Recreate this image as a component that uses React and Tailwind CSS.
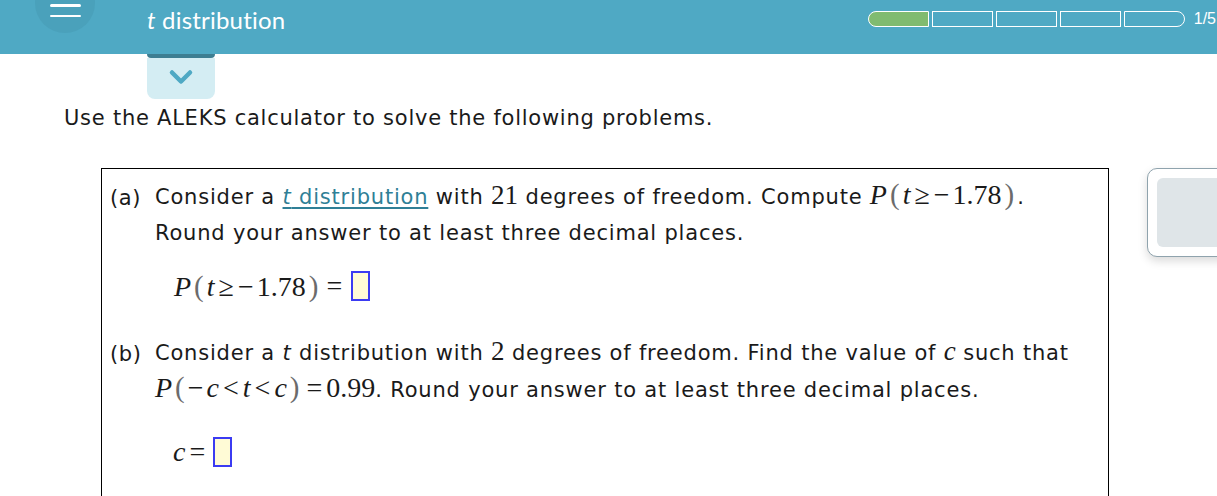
import { ChevronDown } from 'lucide-react'

const serif = "font-['Liberation_Serif','Times_New_Roman',serif] tracking-normal leading-none"
const mathSize = 'text-[28px]'

function AnswerBox() {
  return <span className="inline-block w-[19px] h-[30px] border-2 border-[#3b3bf2] bg-[#fffbd6] align-middle" />
}

function Paren({ children }) {
  return <span className="text-[#6b6b6b] text-[29px] inline-block scale-y-105 mx-[3px] leading-none">{children}</span>
}

function Op({ children }) {
  return <span className="mx-[4px]">{children}</span>
}

function ProbA() {
  return (
    <span className={`${serif} ${mathSize}`}>
      <i>P</i>
      <Paren>(</Paren>
      <i>t</i>
      <Op>≥</Op>
      <span className="mr-[3px]">−</span>1.78
      <Paren>)</Paren>
    </span>
  )
}

function ProgressBar() {
  const segments = [true, false, false, false, false]
  return (
    <div className="flex items-center gap-[3px]">
      {segments.map((done, i) => (
        <div
          key={i}
          className={`h-[16px] w-[61px] border-[1.5px] border-white ${
            i === 0 ? 'rounded-l-full' : ''
          } ${i === segments.length - 1 ? 'rounded-r-full' : ''} ${done ? 'bg-[#80bb70]' : ''}`}
        />
      ))}
    </div>
  )
}

export default function App() {
  return (
    <div className="relative w-[1217px] h-[496px] overflow-hidden bg-white font-['DejaVu_Sans',Verdana,sans-serif] text-[#1a1a1a]">
      {/* Header */}
      <div className="relative h-[54px] bg-[#4fa9c4] flex items-center">
        <div className="absolute left-[35px] top-[-27px] w-[60px] h-[60px] rounded-full bg-[#4aa1bb] flex flex-col items-center justify-end pb-[16px] gap-[8px]">
          <span className="block w-[31px] h-[2.5px] rounded bg-white" />
          <span className="block w-[31px] h-[2.5px] rounded bg-white" />
        </div>
        <div className="ml-[147px] text-white text-[24px] tracking-[0.2px] font-['Lato','Open_Sans',sans-serif] mt-[-15px]">
          <span className="italic">t</span> distribution
        </div>
        <div className="ml-auto flex items-center gap-[9px] mt-[-17px] mr-[1px]">
          <ProgressBar />
          <span className="text-white text-[16px] font-['Liberation_Sans',Arial,sans-serif]">1/5</span>
        </div>
      </div>

      {/* Collapse tab */}
      <div className="ml-[147px] w-[68px]">
        <div className="h-[4px] bg-[#3d7e92] rounded-b-sm" />
        <div className="h-[41px] bg-[#d4edf3] rounded-b-[8px] flex items-center justify-center">
          <ChevronDown size={36} strokeWidth={3} className="text-[#4fa9c4] -mt-[4px]" />
        </div>
      </div>

      <p className="ml-[64px] mt-[5px] text-[21px] leading-[28px] tracking-[0.75px]">
        Use the ALEKS calculator to solve the following problems.
      </p>

      <div className="flex items-start mt-[36px]">
        {/* Question box */}
        <div className="shrink-0 ml-[101px] w-[1008px] h-[340px] border border-black pt-[14px] text-[21px] tracking-[0.8px]">
          <div className="flex">
            <span className="w-[53px] pl-[8px] shrink-0 tracking-[0.6px]">(a)</span>
            <div className="leading-[36px] -mt-[4px]">
              <div className="h-[36px]">
                Consider a{' '}
                <span className="text-[#2f7f96] underline underline-offset-[3px]">
                  <span className="italic">t</span> distribution
                </span>{' '}
                with <span className={`${serif} text-[27px]`}>21</span> degrees of freedom. Compute <ProbA />.
              </div>
              <div className="h-[36px]">Round your answer to at least three decimal places.</div>
            </div>
          </div>
          <div className="ml-[72px] mt-[18px] h-[34px] flex items-center">
            <ProbA />
            <span className={`${serif} ${mathSize} ml-[5px] mr-[9px]`}>=</span>
            <AnswerBox />
          </div>

          <div className="flex mt-[36px]">
            <span className="w-[53px] pl-[8px] shrink-0 tracking-[0.6px]">(b)</span>
            <div className="leading-[37px] -mt-[4px]">
              <div className="h-[37px]">
                Consider a <span className="italic">t</span> distribution with{' '}
                <span className={`${serif} text-[27px]`}>2</span> degrees of freedom. Find the value of{' '}
                <i className={`${serif} text-[27px]`}>c</i> such that
              </div>
              <div className="h-[37px]">
                <span className={`${serif} ${mathSize}`}>
                  <i>P</i>
                  <Paren>(</Paren>
                  <span className="mr-[3px]">−</span>
                  <i>c</i>
                  <Op>&lt;</Op>
                  <i>t</i>
                  <Op>&lt;</Op>
                  <i>c</i>
                  <Paren>)</Paren>
                  <span className="mx-[4px]">=</span>0.99
                </span>
                . Round your answer to at least three decimal places.
              </div>
            </div>
          </div>
          <div className="ml-[71px] mt-[26px] h-[34px] flex items-center">
            <i className={`${serif} ${mathSize}`}>c</i>
            <span className={`${serif} ${mathSize} ml-[4px] mr-[8px]`}>=</span>
            <AnswerBox />
          </div>
        </div>

        {/* Side panel */}
        <div className="shrink-0 ml-[38px] w-[90px] h-[89px] border border-[#8fa3ad] rounded-[10px] bg-white shadow-[0_4px_10px_rgba(0,0,0,0.15)] p-[9px] pr-0">
          <div className="h-full bg-[#dfe5e8] rounded-l-[6px]" />
        </div>
      </div>
    </div>
  )
}
